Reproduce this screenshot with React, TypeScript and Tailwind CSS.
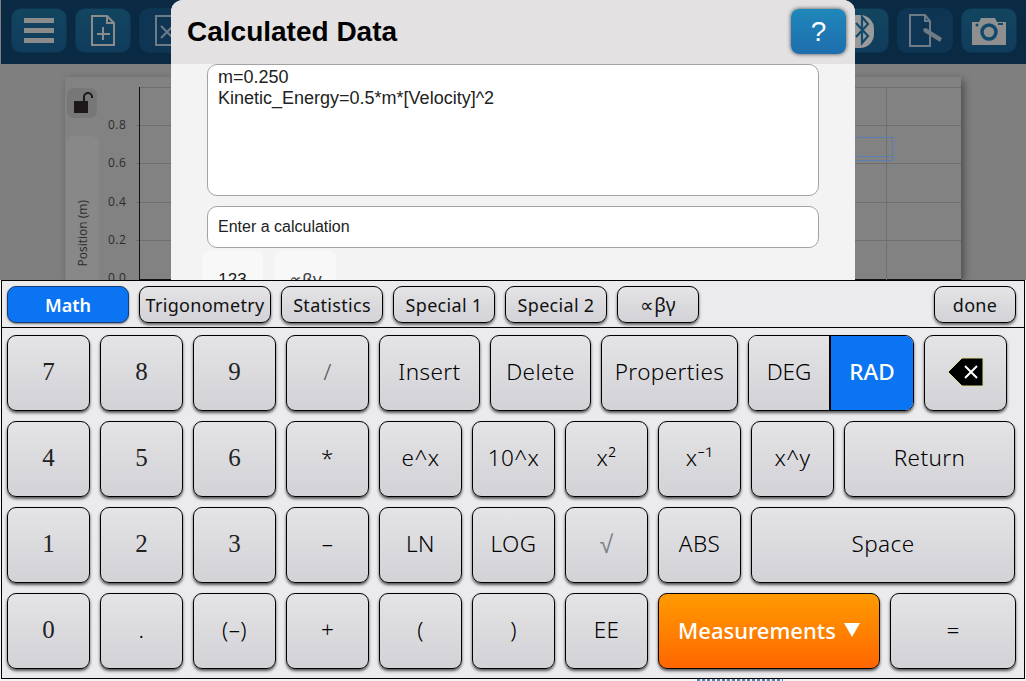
import React from "react";

const keyBase =
  "h-[76px] pb-[2px] shrink-0 flex items-center justify-center rounded-[9px] border border-black bg-gradient-to-b from-[#e4e4e6] to-[#d2d2d7] text-black text-[22.5px] font-light shadow-[0_2px_3px_rgba(0,0,0,0.65)] tracking-[0.4px]";
const tabBase =
  "h-[37px] pt-[1px] shrink-0 flex items-center justify-center rounded-[9px] border border-black bg-gradient-to-b from-[#e4e4e6] to-[#d2d2d7] text-[#111] text-[18px] shadow-[0_2px_3px_rgba(0,0,0,0.6)] tracking-[0.3px]";

function K({ w = "w-[83px]", children }: { w?: string; children: React.ReactNode }) {
  return <div className={`${keyBase} ${w}`}>{children}</div>;
}

function D({ children }: { children: React.ReactNode }) {
  return (
    <div className={`${keyBase} w-[83px] font-['Liberation_Serif',serif] text-[25px] tracking-normal`}>
      <span className="text-[#222]">{children}</span>
    </div>
  );
}

function Tab({ w, children }: { w: string; children: React.ReactNode }) {
  return <div className={`${tabBase} ${w}`}>{children}</div>;
}

function ToolBtn({ children, dim = false }: { children: React.ReactNode; dim?: boolean }) {
  return (
    <div
      className={`w-[56px] h-[45px] shrink-0 rounded-[10px] flex items-center justify-center border border-[#0c3550] ${
        dim ? "bg-[#0e3654]" : "bg-gradient-to-b from-[#124560] to-[#103c5c]"
      }`}
    >
      {children}
    </div>
  );
}

export default function App() {
  return (
    <div className="w-[1026px] h-[681px] overflow-hidden bg-[#f4f4f4] font-['Liberation_Sans',sans-serif]">
      <div className="relative h-[280px] overflow-hidden bg-[#7f7f7f]">
        {/* toolbar */}
        <div className="h-[64px] bg-[#0a2a44] ml-px flex items-start pt-[8px] pl-[10px] gap-[8px]">
          <ToolBtn>
            <svg width="32" height="26" viewBox="0 0 32 26" fill="#8b8b8b">
              <rect x="1" y="0" width="30" height="5" />
              <rect x="1" y="10" width="30" height="5" />
              <rect x="1" y="20" width="30" height="5" />
            </svg>
          </ToolBtn>
          <ToolBtn>
            <svg width="26" height="32" viewBox="0 0 26 32" fill="none" stroke="#8b8b8b" strokeWidth="2">
              <path d="M2 1h15l7 7v22H2z" />
              <path d="M17 1v7h7" />
              <path d="M13 12v13M7 19h13" />
            </svg>
          </ToolBtn>
          <ToolBtn dim>
            <svg width="26" height="32" viewBox="0 0 26 32" fill="none" stroke="#6e7a84" strokeWidth="2">
              <path d="M2 1h22v29H2z" />
              <path d="M7 11l12 12M19 11L7 23" />
            </svg>
          </ToolBtn>
        </div>
        <div className="absolute left-[833px] top-[8px]">
          <ToolBtn>
            <svg width="54" height="43" viewBox="0 0 54 43">
              <rect x="9" y="6" width="31" height="33" rx="14" fill="#9a9a9a" />
              <path d="M22 14L34 27l-6 7V8l6 7L22 28" fill="none" stroke="#124a6b" strokeWidth="2.2" />
            </svg>
          </ToolBtn>
        </div>
        <div className="absolute left-[897px] top-[8px]">
          <ToolBtn dim>
            <svg width="38" height="34" viewBox="0 0 38 34" fill="none" stroke="#6e7a84" strokeWidth="2">
              <path d="M4 1h15l5 6v25H4z" />
              <path d="M19 1v6h5" />
              <path d="M17 15l3-1 16 10-2 4-16-10z" fill="#6e7a84" stroke="none" />
            </svg>
          </ToolBtn>
        </div>
        <div className="absolute left-[961px] top-[8px]">
          <ToolBtn>
            <svg width="36" height="28" viewBox="0 0 36 28">
              <path d="M1 5h7l2-4h14l2 4h9v23H1z" fill="#8f8f8f" />
              <circle cx="18" cy="15" r="7" fill="none" stroke="#124a6b" strokeWidth="3.5" />
              <rect x="27" y="6" width="5" height="2" fill="#124a6b" />
              <circle cx="6" cy="8" r="1.5" fill="#124a6b" />
            </svg>
          </ToolBtn>
        </div>

        {/* graph card */}
        <div className="absolute left-[65px] top-[77px] w-[896px] h-[203px] bg-[#828282] shadow-[3px_3px_8px_rgba(0,0,0,0.4)]">
          <div className="absolute left-[2px] top-[11px] w-[30px] h-[30px] rounded-[7px] bg-[#777] flex items-center justify-center">
            <svg width="22" height="22" viewBox="0 0 22 22">
              <rect x="3" y="9" width="14" height="12" fill="#1c1818" />
              <path d="M13 9V5a4 4 0 0 1 8 0v1" fill="none" stroke="#1c1818" strokeWidth="2" />
            </svg>
          </div>
          <div className="absolute left-[1px] top-[59px] w-[33px] h-[144px] rounded-t-[8px] bg-[#888] flex items-end justify-center pb-[14px]">
            <span className="[writing-mode:vertical-rl] rotate-180 text-[12px] text-[#2c2c2c] font-['Open_Sans',sans-serif]">
              Position (m)
            </span>
          </div>
          {[
            ["0.8", 48],
            ["0.6", 86],
            ["0.4", 125],
            ["0.2", 163],
          ].map(([l, y]) => (
            <div key={l as string}>
              <span
                className="absolute left-[43px] text-[12px] text-[#2c2c2c] tracking-[0.5px] font-['Open_Sans',sans-serif] leading-[14px]"
                style={{ top: (y as number) - 7 }}
              >
                {l}
              </span>
              <div className="absolute left-[71px] right-0 h-px bg-[#6e6e6e]" style={{ top: y as number }} />
            </div>
          ))}
          <span className="absolute left-[43px] top-[194px] text-[12px] text-[#2c2c2c] tracking-[0.5px] font-['Open_Sans',sans-serif] leading-[14px]">
            0.0
          </span>
          <div className="absolute left-[74px] right-0 top-[10px] h-px bg-[#6e6e6e]" />
          <div className="absolute left-[74px] top-[10px] bottom-0 w-px bg-[#111]" />
          <div className="absolute left-[74px] right-0 bottom-0 h-px bg-[#111]" />
          <div className="absolute left-[821px] top-[10px] bottom-0 w-px bg-[#6e6e6e]" />
          <div className="absolute left-[780px] top-[60px] w-[48px] h-[24px] border border-[#5b7db5]" />
          <div className="absolute left-[780px] top-[79px] w-[48px] h-px bg-[#5b7db5]" />
        </div>

        {/* modal */}
        <div className="absolute left-[171px] top-0 w-[684px] h-[280px] rounded-t-[12px] bg-[#f3f3f3] overflow-hidden">
          <div className="h-[64px] bg-[#e3e1e2] pl-[16px] pr-[9px] flex items-start justify-between pt-[10px]">
            <h1 className="text-[28px] font-bold text-black leading-[43px]">Calculated Data</h1>
            <div className="w-[55px] h-[45px] rounded-[8px] bg-gradient-to-b from-[#1f88ba] to-[#1e6dad] shadow-[0_0_4px_rgba(0,0,0,0.7)] flex items-center justify-center text-white text-[28px] mt-[-1px]">
              ?
            </div>
          </div>
          <div className="px-[36px]">
            <div className="h-[132px] rounded-[10px] border border-[#a3a3a3] bg-white pl-[10px] pt-[2px] text-[18px] leading-[21px] text-[#222]">
              <div>m=0.250</div>
              <div>Kinetic_Energy=0.5*m*[Velocity]^2</div>
            </div>
            <div className="mt-[10px] h-[42px] rounded-[10px] border border-[#a3a3a3] bg-white pl-[10px] flex items-center text-[16px] text-[#222]">
              Enter a calculation
            </div>
          </div>
          <div className="flex gap-[12px] pl-[31px] mt-[3px]">
            <div className="w-[61px] h-[60px] rounded-[6px] bg-[#f8f8f8] text-center pt-[16px] text-[17px] text-[#222]">123</div>
            <div className="w-[61px] h-[60px] rounded-[6px] bg-[#f8f8f8] text-center pt-[16px] text-[18px] text-[#444]">∝βγ</div>
          </div>
        </div>
      </div>

      {/* keyboard */}
      <div className="h-[399px] ml-px mr-px border border-black bg-[#ebebee] font-['Noto_Sans',sans-serif]">
        <div className="h-[47px] border-b border-black pl-[5px] pr-[8px] pt-[5px] flex gap-[10px]">
          <div className="h-[37px] pt-[1px] w-[122px] shrink-0 flex items-center justify-center rounded-[9px] border border-[#1a3f73] bg-[#0a74f2] text-white text-[18px] font-semibold shadow-[0_1px_2px_rgba(0,0,0,0.5)]">
            Math
          </div>
          <Tab w="w-[132px]">Trigonometry</Tab>
          <Tab w="w-[102px]">Statistics</Tab>
          <Tab w="w-[102px]">Special 1</Tab>
          <Tab w="w-[102px]">Special 2</Tab>
          <Tab w="w-[82px]">
            <span className="text-[19px]">∝βγ</span>
          </Tab>
          <div className="flex-1" />
          <Tab w="w-[82px]">done</Tab>
        </div>
        <div className="pl-[5px] pt-[7px] flex flex-col gap-[10px]">
          <div className="flex gap-[10px]">
            <D>7</D>
            <D>8</D>
            <D>9</D>
            <K>
              <span className="text-[#555]">/</span>
            </K>
            <K w="w-[101px]">Insert</K>
            <K w="w-[101px]">Delete</K>
            <K w="w-[137px]">Properties</K>
            <div className="flex w-[166px] h-[76px] shrink-0 rounded-[9px] border border-black shadow-[0_2px_3px_rgba(0,0,0,0.65)] overflow-hidden">
              <div className="w-[82px] pb-[2px] flex items-center justify-center bg-gradient-to-b from-[#e4e4e6] to-[#d2d2d7] border-r-2 border-black text-[22.5px] font-light text-black">
                DEG
              </div>
              <div className="flex-1 pb-[2px] flex items-center justify-center bg-[#0a74f2] text-white text-[22.5px] font-medium">RAD</div>
            </div>
            <K>
              <svg width="37" height="30" viewBox="0 0 37 30">
                <path d="M1 15L15 1h21v28H15z" fill="#000" stroke="#dddd99" strokeWidth="1" />
                <path d="M18 9l12 12M30 9L18 21" stroke="#fff" strokeWidth="2" />
              </svg>
            </K>
          </div>
          <div className="flex gap-[10px]">
            <D>4</D>
            <D>5</D>
            <D>6</D>
            <K>*</K>
            <K>e^x</K>
            <K>10^x</K>
            <K>x²</K>
            <K>x⁻¹</K>
            <K>x^y</K>
            <K w="w-[171px]">Return</K>
          </div>
          <div className="flex gap-[10px]">
            <D>1</D>
            <D>2</D>
            <D>3</D>
            <K>–</K>
            <K>LN</K>
            <K>LOG</K>
            <K>
              <span className="font-['Noto_Sans',sans-serif] font-thin text-[#7a808c] text-[25px]">√</span>
            </K>
            <K>ABS</K>
            <K w="w-[264px]">Space</K>
          </div>
          <div className="flex gap-[10px]">
            <D>0</D>
            <K>.</K>
            <K>(–)</K>
            <K>+</K>
            <K>(</K>
            <K>)</K>
            <K>EE</K>
            <div className="w-[222px] h-[76px] pb-[2px] shrink-0 rounded-[9px] border border-black bg-gradient-to-b from-[#ff9a00] to-[#ff6600] flex items-center justify-center gap-[8px] text-white text-[22px] font-medium shadow-[0_2px_3px_rgba(0,0,0,0.65)]">
              <span>Measurements</span>
              <svg width="16" height="14" viewBox="0 0 16 14" fill="#fff">
                <path d="M0 0h16L8 14z" />
              </svg>
            </div>
            <K w="w-[126px]">=</K>
          </div>
        </div>
      </div>
      <div className="ml-[697px] w-[86px] h-[2px] bg-[repeating-linear-gradient(90deg,#5a7fb5_0,#5a7fb5_3px,#f4f4f4_3px,#f4f4f4_5px)]" />
    </div>
  );
}
